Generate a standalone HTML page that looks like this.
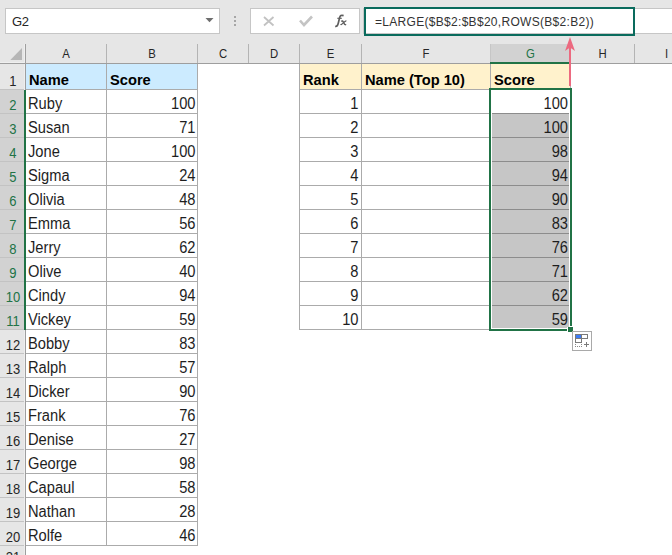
<!DOCTYPE html>
<html><head><meta charset="utf-8"><style>
html,body{margin:0;padding:0;width:672px;height:555px;overflow:hidden;background:#fff;}
body>div,body>svg{position:absolute;}
div{white-space:nowrap;}
.tb{font-family:"Liberation Sans",sans-serif;font-size:13px;line-height:15px;color:#262626;}
.hd{font-family:"Liberation Sans",sans-serif;font-size:13.5px;line-height:15px;color:#262626;}
.cl{font-family:"Liberation Sans",sans-serif;font-size:14.67px;line-height:17px;color:#000;transform:scaleY(1.08);transform-origin:0 13.6px;}
.nm{transform:none;}
.cx{transform:scaleX(0.84);transform-origin:50% 0;}
.rh{font-size:14px;transform:scaleX(0.93);transform-origin:50% 0;}
.big{font-size:16px;transform:scaleX(0.9169);transform-origin:0 0;color:#1e1e1e;}
.big.r{transform-origin:100% 0;}
.fm{letter-spacing:-0.33px;}
.fm2{font-size:12px;letter-spacing:0.3px;color:#333;}
.fx{font-family:"Liberation Serif",serif;font-size:15px;line-height:17px;}
</style></head><body>
<div style="left:0px;top:0px;width:672px;height:63px;background:#e6e6e6;"></div>
<div style="left:5px;top:8px;width:215px;height:26px;background:#ffffff;border:1px solid #c6c6c6;box-sizing:border-box;"></div>
<div class="tb fm" style="left:12px;top:14px;">G2</div>
<svg style="position:absolute;left:205px;top:17px" width="10" height="6"><path d="M0.5 1 L8.5 1 L4.5 5.2 Z" fill="#6e6e6e"/></svg>
<div style="left:234px;top:16px;width:2px;height:2px;background:#a6a6a6;"></div>
<div style="left:234px;top:20px;width:2px;height:2px;background:#a6a6a6;"></div>
<div style="left:234px;top:24px;width:2px;height:2px;background:#a6a6a6;"></div>
<div style="left:250px;top:8px;width:110px;height:26px;background:#ffffff;border:1px solid #c6c6c6;box-sizing:border-box;"></div>
<svg style="position:absolute;left:250px;top:8px" width="110" height="26"><path d="M14 9 L23.5 17.5 M23.5 9 L14 17.5" stroke="#c2c2c2" stroke-width="1.8" fill="none"/><path d="M50 12.5 L54 17 L62 8.5" stroke="#c4c4c4" stroke-width="2.6" fill="none"/></svg>
<svg style="position:absolute;left:328px;top:10px" width="28" height="22"><path d="M7.2 16.3 C8.6 16.6 9.6 15.8 10.2 13.5 L11.6 7.8 C12.2 5.6 13.2 4.8 15.6 5.6" stroke="#5e5e5e" stroke-width="1.7" fill="none"/><path d="M9.3 8.3 H13.8" stroke="#5e5e5e" stroke-width="1.1" fill="none"/><path d="M13.2 11.4 C14.2 10.6 14.8 11 15.4 12.2 L16.4 14 C16.8 14.8 17.4 14.8 18 14.2" stroke="#5e5e5e" stroke-width="1.5" fill="none"/><path d="M18.4 10.9 C17.6 10.8 16.8 11.4 15.6 12.6 L14.2 13.9 C13.6 14.6 13 14.8 12.4 14.4" stroke="#5e5e5e" stroke-width="1.1" fill="none"/></svg>
<div style="left:363px;top:8px;width:311px;height:26px;background:#ffffff;border:1px solid #c6c6c6;box-sizing:border-box;"></div>
<div style="left:364px;top:7px;width:271px;height:29px;background:transparent;border:2px solid #0a6b5d;box-sizing:border-box;"></div>
<div class="tb fm2" style="left:375px;top:15px;">=LARGE($B$2:$B$20,ROWS(B$2:B2))</div>
<div style="left:0px;top:63px;width:672px;height:1px;background:#9e9e9e;"></div>
<svg style="position:absolute;left:10px;top:48px" width="12" height="12"><path d="M12 0 L12 12 L0.3 12 Z" fill="#b6b6b6"/></svg>
<div style="left:0px;top:62px;width:25px;height:1px;background:#efefef;"></div>
<div style="left:24px;top:44px;width:1px;height:18px;background:#efefef;"></div>
<div style="left:491px;top:44px;width:79px;height:18px;background:#d2d2d2;"></div>
<div style="left:25px;top:44px;width:1px;height:19px;background:#9e9e9e;"></div>
<div style="left:106px;top:44px;width:1px;height:19px;background:#b4b4b4;"></div>
<div style="left:197px;top:44px;width:1px;height:19px;background:#b4b4b4;"></div>
<div style="left:248px;top:44px;width:1px;height:19px;background:#b4b4b4;"></div>
<div style="left:299px;top:44px;width:1px;height:19px;background:#b4b4b4;"></div>
<div style="left:361px;top:44px;width:1px;height:19px;background:#b4b4b4;"></div>
<div style="left:490px;top:44px;width:1px;height:19px;background:#c6c6c6;"></div>
<div style="left:570px;top:44px;width:1px;height:19px;background:#b4b4b4;"></div>
<div style="left:634px;top:44px;width:1px;height:19px;background:#b4b4b4;"></div>
<div style="left:490px;top:62px;width:80px;height:2px;background:#217346;"></div>
<div class="hd cx" style="left:26px;top:46px;width:80px;text-align:center;">A</div>
<div class="hd cx" style="left:107px;top:46px;width:90px;text-align:center;">B</div>
<div class="hd cx" style="left:198px;top:46px;width:50px;text-align:center;">C</div>
<div class="hd cx" style="left:249px;top:46px;width:50px;text-align:center;">D</div>
<div class="hd cx" style="left:300px;top:46px;width:61px;text-align:center;">E</div>
<div class="hd cx" style="left:362px;top:46px;width:128px;text-align:center;">F</div>
<div class="hd cx" style="left:491px;top:46px;width:79px;text-align:center;color:#217346;">G</div>
<div class="hd cx" style="left:571px;top:46px;width:63px;text-align:center;">H</div>
<div class="hd cx" style="left:635px;top:46px;width:63px;text-align:center;">I</div>
<div style="left:0px;top:64px;width:25px;height:491px;background:#e6e6e6;"></div>
<div style="left:0px;top:90px;width:24px;height:239px;background:#d2d2d2;"></div>
<div style="left:25px;top:64px;width:1px;height:491px;background:#9e9e9e;"></div>
<div style="left:0px;top:89px;width:25px;height:1px;background:#c3c3c3;"></div>
<div class="hd rh" style="left:1px;top:74px;width:24px;text-align:center;">1</div>
<div style="left:0px;top:113px;width:25px;height:1px;background:#c3c3c3;"></div>
<div class="hd rh" style="left:1px;top:98px;width:24px;text-align:center;color:#217346;">2</div>
<div style="left:0px;top:137px;width:25px;height:1px;background:#c3c3c3;"></div>
<div class="hd rh" style="left:1px;top:122px;width:24px;text-align:center;color:#217346;">3</div>
<div style="left:0px;top:161px;width:25px;height:1px;background:#c3c3c3;"></div>
<div class="hd rh" style="left:1px;top:146px;width:24px;text-align:center;color:#217346;">4</div>
<div style="left:0px;top:185px;width:25px;height:1px;background:#c3c3c3;"></div>
<div class="hd rh" style="left:1px;top:170px;width:24px;text-align:center;color:#217346;">5</div>
<div style="left:0px;top:209px;width:25px;height:1px;background:#c3c3c3;"></div>
<div class="hd rh" style="left:1px;top:194px;width:24px;text-align:center;color:#217346;">6</div>
<div style="left:0px;top:233px;width:25px;height:1px;background:#c3c3c3;"></div>
<div class="hd rh" style="left:1px;top:218px;width:24px;text-align:center;color:#217346;">7</div>
<div style="left:0px;top:257px;width:25px;height:1px;background:#c3c3c3;"></div>
<div class="hd rh" style="left:1px;top:242px;width:24px;text-align:center;color:#217346;">8</div>
<div style="left:0px;top:281px;width:25px;height:1px;background:#c3c3c3;"></div>
<div class="hd rh" style="left:1px;top:266px;width:24px;text-align:center;color:#217346;">9</div>
<div style="left:0px;top:305px;width:25px;height:1px;background:#c3c3c3;"></div>
<div class="hd rh" style="left:1px;top:290px;width:24px;text-align:center;color:#217346;">10</div>
<div style="left:0px;top:329px;width:25px;height:1px;background:#c3c3c3;"></div>
<div class="hd rh" style="left:1px;top:314px;width:24px;text-align:center;color:#217346;">11</div>
<div style="left:0px;top:353px;width:25px;height:1px;background:#c3c3c3;"></div>
<div class="hd rh" style="left:1px;top:338px;width:24px;text-align:center;">12</div>
<div style="left:0px;top:377px;width:25px;height:1px;background:#c3c3c3;"></div>
<div class="hd rh" style="left:1px;top:362px;width:24px;text-align:center;">13</div>
<div style="left:0px;top:401px;width:25px;height:1px;background:#c3c3c3;"></div>
<div class="hd rh" style="left:1px;top:386px;width:24px;text-align:center;">14</div>
<div style="left:0px;top:425px;width:25px;height:1px;background:#c3c3c3;"></div>
<div class="hd rh" style="left:1px;top:410px;width:24px;text-align:center;">15</div>
<div style="left:0px;top:449px;width:25px;height:1px;background:#c3c3c3;"></div>
<div class="hd rh" style="left:1px;top:434px;width:24px;text-align:center;">16</div>
<div style="left:0px;top:473px;width:25px;height:1px;background:#c3c3c3;"></div>
<div class="hd rh" style="left:1px;top:458px;width:24px;text-align:center;">17</div>
<div style="left:0px;top:497px;width:25px;height:1px;background:#c3c3c3;"></div>
<div class="hd rh" style="left:1px;top:482px;width:24px;text-align:center;">18</div>
<div style="left:0px;top:521px;width:25px;height:1px;background:#c3c3c3;"></div>
<div class="hd rh" style="left:1px;top:506px;width:24px;text-align:center;">19</div>
<div style="left:0px;top:545px;width:25px;height:1px;background:#c3c3c3;"></div>
<div class="hd rh" style="left:1px;top:530px;width:24px;text-align:center;">20</div>
<div style="left:0px;top:569px;width:25px;height:1px;background:#c3c3c3;"></div>
<div class="hd rh" style="left:1px;top:550px;width:24px;text-align:center;">21</div>
<div style="left:24px;top:64px;width:1px;height:491px;background:#eeeeee;"></div>
<div style="left:24px;top:90px;width:2px;height:240px;background:#217346;"></div>
<div style="left:26px;top:64px;width:171px;height:25px;background:#ccebff;"></div>
<div style="left:106px;top:64px;width:1px;height:482px;background:#ababab;"></div>
<div style="left:197px;top:64px;width:1px;height:482px;background:#ababab;"></div>
<div style="left:26px;top:89px;width:172px;height:1px;background:#ababab;"></div>
<div style="left:26px;top:113px;width:172px;height:1px;background:#ababab;"></div>
<div style="left:26px;top:137px;width:172px;height:1px;background:#ababab;"></div>
<div style="left:26px;top:161px;width:172px;height:1px;background:#ababab;"></div>
<div style="left:26px;top:185px;width:172px;height:1px;background:#ababab;"></div>
<div style="left:26px;top:209px;width:172px;height:1px;background:#ababab;"></div>
<div style="left:26px;top:233px;width:172px;height:1px;background:#ababab;"></div>
<div style="left:26px;top:257px;width:172px;height:1px;background:#ababab;"></div>
<div style="left:26px;top:281px;width:172px;height:1px;background:#ababab;"></div>
<div style="left:26px;top:305px;width:172px;height:1px;background:#ababab;"></div>
<div style="left:26px;top:329px;width:172px;height:1px;background:#ababab;"></div>
<div style="left:26px;top:353px;width:172px;height:1px;background:#ababab;"></div>
<div style="left:26px;top:377px;width:172px;height:1px;background:#ababab;"></div>
<div style="left:26px;top:401px;width:172px;height:1px;background:#ababab;"></div>
<div style="left:26px;top:425px;width:172px;height:1px;background:#ababab;"></div>
<div style="left:26px;top:449px;width:172px;height:1px;background:#ababab;"></div>
<div style="left:26px;top:473px;width:172px;height:1px;background:#ababab;"></div>
<div style="left:26px;top:497px;width:172px;height:1px;background:#ababab;"></div>
<div style="left:26px;top:521px;width:172px;height:1px;background:#ababab;"></div>
<div style="left:26px;top:545px;width:172px;height:1px;background:#ababab;"></div>
<div style="left:300px;top:64px;width:270px;height:25px;background:#fff2cc;"></div>
<div style="left:299px;top:64px;width:1px;height:266px;background:#ababab;"></div>
<div style="left:361px;top:64px;width:1px;height:266px;background:#ababab;"></div>
<div style="left:490px;top:64px;width:1px;height:266px;background:#ababab;"></div>
<div style="left:570px;top:64px;width:1px;height:266px;background:#ababab;"></div>
<div style="left:299px;top:89px;width:191px;height:1px;background:#ababab;"></div>
<div style="left:299px;top:113px;width:191px;height:1px;background:#ababab;"></div>
<div style="left:299px;top:137px;width:191px;height:1px;background:#ababab;"></div>
<div style="left:299px;top:161px;width:191px;height:1px;background:#ababab;"></div>
<div style="left:299px;top:185px;width:191px;height:1px;background:#ababab;"></div>
<div style="left:299px;top:209px;width:191px;height:1px;background:#ababab;"></div>
<div style="left:299px;top:233px;width:191px;height:1px;background:#ababab;"></div>
<div style="left:299px;top:257px;width:191px;height:1px;background:#ababab;"></div>
<div style="left:299px;top:281px;width:191px;height:1px;background:#ababab;"></div>
<div style="left:299px;top:305px;width:191px;height:1px;background:#ababab;"></div>
<div style="left:299px;top:329px;width:191px;height:1px;background:#ababab;"></div>
<div style="left:492px;top:114px;width:77px;height:214px;background:#c6c6c6;"></div>
<div style="left:491px;top:90px;width:1px;height:239px;background:#ffffff;"></div>
<div style="left:569px;top:90px;width:1px;height:239px;background:#ffffff;"></div>
<div style="left:492px;top:113px;width:77px;height:1px;background:#8c8c8c;"></div>
<div style="left:492px;top:137px;width:77px;height:1px;background:#8c8c8c;"></div>
<div style="left:492px;top:161px;width:77px;height:1px;background:#8c8c8c;"></div>
<div style="left:492px;top:185px;width:77px;height:1px;background:#8c8c8c;"></div>
<div style="left:492px;top:209px;width:77px;height:1px;background:#8c8c8c;"></div>
<div style="left:492px;top:233px;width:77px;height:1px;background:#8c8c8c;"></div>
<div style="left:492px;top:257px;width:77px;height:1px;background:#8c8c8c;"></div>
<div style="left:492px;top:281px;width:77px;height:1px;background:#8c8c8c;"></div>
<div style="left:492px;top:305px;width:77px;height:1px;background:#8c8c8c;"></div>
<div style="left:489px;top:88px;width:83px;height:2px;background:#217346;"></div>
<div style="left:489px;top:88px;width:2px;height:243px;background:#217346;"></div>
<div style="left:570px;top:88px;width:2px;height:238px;background:#217346;"></div>
<div style="left:489px;top:329px;width:78px;height:2px;background:#217346;"></div>
<div style="left:568px;top:327px;width:5px;height:5px;background:#217346;"></div>
<div style="left:567px;top:327px;width:1px;height:4px;background:#ffffff;"></div>
<div style="left:570px;top:326px;width:2px;height:1px;background:#ffffff;"></div>
<div class="cl nm" style="left:29px;top:72px;"><b>Name</b></div>
<div class="cl nm" style="left:110px;top:72px;"><b>Score</b></div>
<div class="cl big" style="left:28px;top:94.5px;">Ruby</div>
<div class="cl big r" style="left:107px;top:94.5px;width:88.5px;text-align:right;">100</div>
<div class="cl big" style="left:28px;top:118.5px;">Susan</div>
<div class="cl big r" style="left:107px;top:118.5px;width:88.5px;text-align:right;">71</div>
<div class="cl big" style="left:28px;top:142.5px;">Jone</div>
<div class="cl big r" style="left:107px;top:142.5px;width:88.5px;text-align:right;">100</div>
<div class="cl big" style="left:28px;top:166.5px;">Sigma</div>
<div class="cl big r" style="left:107px;top:166.5px;width:88.5px;text-align:right;">24</div>
<div class="cl big" style="left:28px;top:190.5px;">Olivia</div>
<div class="cl big r" style="left:107px;top:190.5px;width:88.5px;text-align:right;">48</div>
<div class="cl big" style="left:28px;top:214.5px;">Emma</div>
<div class="cl big r" style="left:107px;top:214.5px;width:88.5px;text-align:right;">56</div>
<div class="cl big" style="left:28px;top:238.5px;">Jerry</div>
<div class="cl big r" style="left:107px;top:238.5px;width:88.5px;text-align:right;">62</div>
<div class="cl big" style="left:28px;top:262.5px;">Olive</div>
<div class="cl big r" style="left:107px;top:262.5px;width:88.5px;text-align:right;">40</div>
<div class="cl big" style="left:28px;top:286.5px;">Cindy</div>
<div class="cl big r" style="left:107px;top:286.5px;width:88.5px;text-align:right;">94</div>
<div class="cl big" style="left:28px;top:310.5px;">Vickey</div>
<div class="cl big r" style="left:107px;top:310.5px;width:88.5px;text-align:right;">59</div>
<div class="cl big" style="left:28px;top:334.5px;">Bobby</div>
<div class="cl big r" style="left:107px;top:334.5px;width:88.5px;text-align:right;">83</div>
<div class="cl big" style="left:28px;top:358.5px;">Ralph</div>
<div class="cl big r" style="left:107px;top:358.5px;width:88.5px;text-align:right;">57</div>
<div class="cl big" style="left:28px;top:382.5px;">Dicker</div>
<div class="cl big r" style="left:107px;top:382.5px;width:88.5px;text-align:right;">90</div>
<div class="cl big" style="left:28px;top:406.5px;">Frank</div>
<div class="cl big r" style="left:107px;top:406.5px;width:88.5px;text-align:right;">76</div>
<div class="cl big" style="left:28px;top:430.5px;">Denise</div>
<div class="cl big r" style="left:107px;top:430.5px;width:88.5px;text-align:right;">27</div>
<div class="cl big" style="left:28px;top:454.5px;">George</div>
<div class="cl big r" style="left:107px;top:454.5px;width:88.5px;text-align:right;">98</div>
<div class="cl big" style="left:28px;top:478.5px;">Capaul</div>
<div class="cl big r" style="left:107px;top:478.5px;width:88.5px;text-align:right;">58</div>
<div class="cl big" style="left:28px;top:502.5px;">Nathan</div>
<div class="cl big r" style="left:107px;top:502.5px;width:88.5px;text-align:right;">28</div>
<div class="cl big" style="left:28px;top:526.5px;">Rolfe</div>
<div class="cl big r" style="left:107px;top:526.5px;width:88.5px;text-align:right;">46</div>
<div class="cl nm" style="left:303px;top:72px;"><b>Rank</b></div>
<div class="cl nm" style="left:365px;top:72px;"><b>Name (Top 10)</b></div>
<div class="cl nm" style="left:494px;top:72px;"><b>Score</b></div>
<div class="cl big r" style="left:300px;top:94.5px;width:58.5px;text-align:right;">1</div>
<div class="cl big r" style="left:491px;top:94.5px;width:77px;text-align:right;">100</div>
<div class="cl big r" style="left:300px;top:118.5px;width:58.5px;text-align:right;">2</div>
<div class="cl big r" style="left:491px;top:118.5px;width:77px;text-align:right;">100</div>
<div class="cl big r" style="left:300px;top:142.5px;width:58.5px;text-align:right;">3</div>
<div class="cl big r" style="left:491px;top:142.5px;width:77px;text-align:right;">98</div>
<div class="cl big r" style="left:300px;top:166.5px;width:58.5px;text-align:right;">4</div>
<div class="cl big r" style="left:491px;top:166.5px;width:77px;text-align:right;">94</div>
<div class="cl big r" style="left:300px;top:190.5px;width:58.5px;text-align:right;">5</div>
<div class="cl big r" style="left:491px;top:190.5px;width:77px;text-align:right;">90</div>
<div class="cl big r" style="left:300px;top:214.5px;width:58.5px;text-align:right;">6</div>
<div class="cl big r" style="left:491px;top:214.5px;width:77px;text-align:right;">83</div>
<div class="cl big r" style="left:300px;top:238.5px;width:58.5px;text-align:right;">7</div>
<div class="cl big r" style="left:491px;top:238.5px;width:77px;text-align:right;">76</div>
<div class="cl big r" style="left:300px;top:262.5px;width:58.5px;text-align:right;">8</div>
<div class="cl big r" style="left:491px;top:262.5px;width:77px;text-align:right;">71</div>
<div class="cl big r" style="left:300px;top:286.5px;width:58.5px;text-align:right;">9</div>
<div class="cl big r" style="left:491px;top:286.5px;width:77px;text-align:right;">62</div>
<div class="cl big r" style="left:300px;top:310.5px;width:58.5px;text-align:right;">10</div>
<div class="cl big r" style="left:491px;top:310.5px;width:77px;text-align:right;">59</div>
<svg style="position:absolute;left:560px;top:34px" width="20" height="54"><path d="M10 3 L15 17 L10 13.5 L5 17 Z" fill="#ec6a80"/><rect x="9" y="12" width="2" height="40" fill="#ec6a80"/></svg>
<svg style="position:absolute;left:572px;top:331px" width="20" height="20"><rect x="0.5" y="0.5" width="19" height="19" fill="#fff" stroke="#a9a9a9"/><rect x="9.5" y="3.5" width="6" height="4" fill="#fff" stroke="#7a7a7a"/><rect x="3.5" y="3.5" width="6" height="4" fill="#3d7cf6" stroke="#7a7a7a"/><rect x="3.5" y="7.5" width="6" height="4" fill="#fff" stroke="#7a7a7a"/><path d="M3 15.5 h1 m1 0 h1 m1 0 h1 m1 0 h1 M3 13.5 h1 M9 13.5 h1" stroke="#8a8a8a"/><path d="M12 13.5 h5 M14.5 11 v5" stroke="#7a7a7a"/></svg>
</body></html>
